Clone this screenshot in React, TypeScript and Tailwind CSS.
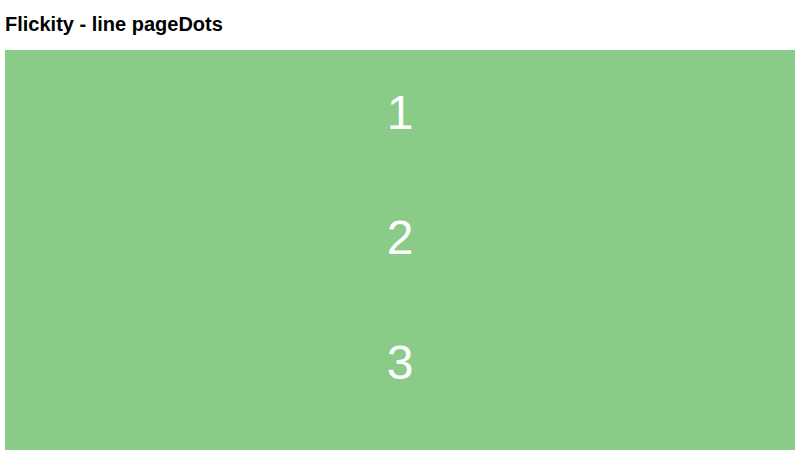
const CELLS = ['1', '2', '3'];

export default function App() {
  return (
    <div className="min-h-screen bg-white px-[5px] font-['Liberation_Sans',Arial,sans-serif]">
      <h1 className="pt-[13px] pb-[14px] text-[20px] font-bold leading-[23px] text-black">
        Flickity - line pageDots
      </h1>
      <div className="bg-[#8acb88] pb-[40px]">
        {CELLS.map((n) => (
          <div key={n} className="flex h-[125px] items-center justify-center text-[48px] text-white">
            {n}
          </div>
        ))}
      </div>
    </div>
  );
}
